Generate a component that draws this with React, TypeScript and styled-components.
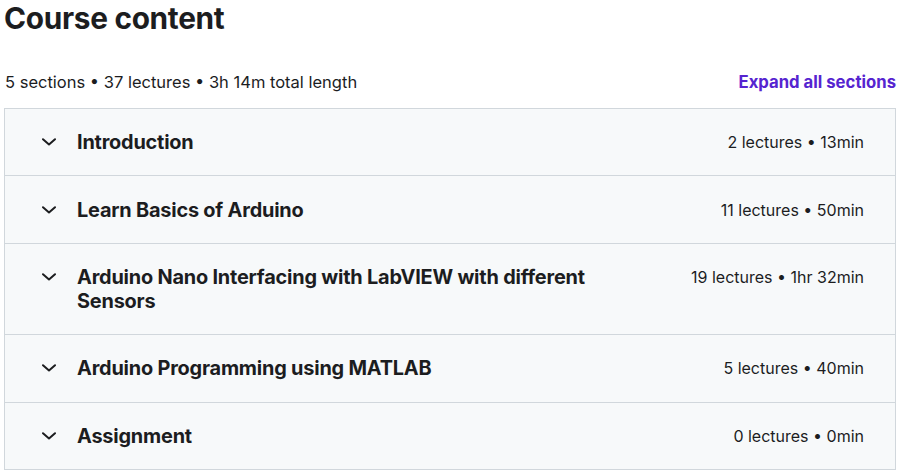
import React from "react";
import styled, { createGlobalStyle } from "styled-components";

const SECTIONS = [
  { title: "Introduction", meta: "2 lectures • 13min" },
  { title: "Learn Basics of Arduino", meta: "11 lectures • 50min" },
  {
    title: "Arduino Nano Interfacing with LabVIEW with different Sensors",
    meta: "19 lectures • 1hr 32min",
  },
  { title: "Arduino Programming using MATLAB", meta: "5 lectures • 40min" },
  { title: "Assignment", meta: "0 lectures • 0min" },
] as const;

const GlobalStyle = createGlobalStyle`
  body {
    margin: 0;
    background: #ffffff;
    color: #1c1d1f;
    font-family: Inter, "Noto Sans", "Liberation Sans", sans-serif;
  }
`;

function Chevron() {
  return (
    <ChevronSvg viewBox="0 0 14 8" aria-hidden>
      <path d="M1 1.2l6 5.2 6-5.2" fill="none" stroke="#1c1d1f" strokeWidth="2" strokeLinecap="round" strokeLinejoin="round" />
    </ChevronSvg>
  );
}

export default function App() {
  return (
    <>
      <GlobalStyle />
      <Page>
        <Title>Course content</Title>
        <SummaryBar>
          <Summary>5 sections • 37 lectures • 3h 14m total length</Summary>
          <ExpandLink href="#">Expand all sections</ExpandLink>
        </SummaryBar>
        <Accordion>
          {SECTIONS.map((s) => (
            <SectionRow key={s.title}>
              <Chevron />
              <SectionTitle>{s.title}</SectionTitle>
              <SectionMeta>{s.meta}</SectionMeta>
            </SectionRow>
          ))}
        </Accordion>
      </Page>
    </>
  );
}

const Page = styled.div`
  width: 892px;
  padding: 0 4px;
`;

const Title = styled.h2`
  margin: 0;
  padding-top: 1px;
  font-size: 29.8px;
  line-height: 34px;
  font-weight: 700;
  letter-spacing: -0.3px;
  color: #1c1d1f;
`;

const SummaryBar = styled.div`
  display: flex;
  align-items: center;
  justify-content: space-between;
  margin-top: 35px;
  height: 24px;
`;

const Summary = styled.span`
  padding-left: 1px;
  font-size: 16.5px;
  color: #1c1d1f;
`;

const ExpandLink = styled.a`
  font-size: 16.7px;
  font-weight: 700;
  color: #5624d0;
  text-decoration: none;
`;

const Accordion = styled.div`
  margin-top: 14px;
  border: 1px solid #d1d7dc;
  border-bottom: none;
`;

const SectionRow = styled.div`
  display: flex;
  align-items: flex-start;
  padding: 21.2px 31px 21.2px 36px;
  background: #f7f9fa;
  border-bottom: 1px solid #d1d7dc;
`;

const ChevronSvg = styled.svg`
  flex: none;
  width: 14px;
  height: 8px;
  margin: 8px 21px 0 1px;
`;

const SectionTitle = styled.div`
  flex: 1;
  max-width: 530px;
  font-size: 19.9px;
  line-height: 24px;
  font-weight: 700;
  color: #1c1d1f;
  letter-spacing: -0.2px;
`;

const SectionMeta = styled.div`
  margin-left: auto;
  font-size: 16px;
  line-height: 24px;
  color: #1c1d1f;
  white-space: nowrap;
`;
